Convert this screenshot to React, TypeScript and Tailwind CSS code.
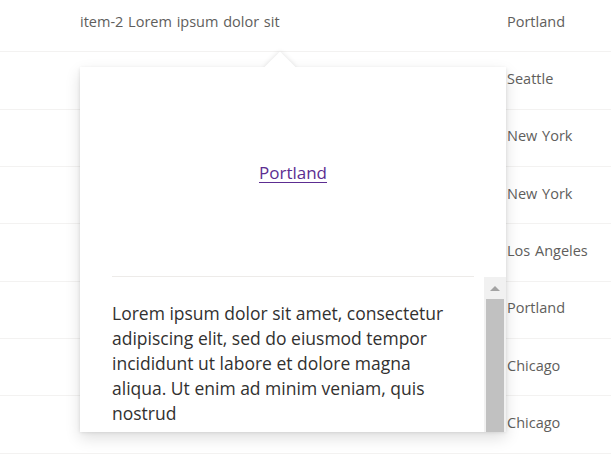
import React from "react";

const ROWS = [
  { name: "item-2 Lorem ipsum dolor sit", city: "Portland" },
  { name: "item-3 Lorem ipsum dolor sit", city: "Seattle" },
  { name: "item-4 Lorem ipsum dolor sit", city: "New York" },
  { name: "item-5 Lorem ipsum dolor sit", city: "New York" },
  { name: "item-6 Lorem ipsum dolor sit", city: "Los Angeles" },
  { name: "item-7 Lorem ipsum dolor sit", city: "Portland" },
  { name: "item-8 Lorem ipsum dolor sit", city: "Chicago" },
  { name: "item-9 Lorem ipsum dolor sit", city: "Chicago" },
];

const BODY =
  "Lorem ipsum dolor sit amet, consectetur adipiscing elit, sed do eiusmod tempor incididunt ut labore et dolore magna aliqua. Ut enim ad minim veniam, quis nostrud";

function DetailsCallout({ city }: { city: string }) {
  return (
    <div className="absolute left-[80px] top-[67px] w-[426px] h-[365px] bg-white shadow-[0_6.4px_14.4px_rgba(0,0,0,0.13),0_1.2px_3.6px_rgba(0,0,0,0.11)]">
      {/* beak, tucked under a white curtain so only the tip shows */}
      <div className="absolute left-[189px] top-[-11px] w-[22px] h-[22px] rotate-45 bg-white shadow-[0_0_5px_rgba(0,0,0,0.13)]" />
      <div className="relative flex flex-col h-full bg-white">
        <div className="h-[209px] pt-[2px] flex items-center justify-center">
          <a href="#" className="text-[17px] text-[#5c2d91] underline underline-offset-[3px]">
            {city}
          </a>
        </div>
        <div className="mx-8 h-px bg-[#edebe9]" />
        <div className="flex flex-1 min-h-0">
          <div className="flex-1 overflow-hidden pl-8 pr-6 pt-[24px]">
            <p className="text-[17.5px] leading-[25px] text-[#323130]">{BODY}</p>
          </div>
          {/* scrollbar */}
          <div className="w-[22px] flex flex-col bg-[#f1f1f1]">
            <div className="h-[22px] flex items-center justify-center">
              <div className="w-0 h-0 border-l-[5px] border-r-[5px] border-b-[5px] border-l-transparent border-r-transparent border-b-[#a3a3a3]" />
            </div>
            <div className="flex-1 mx-[2px] bg-[#c1c1c1]" />
          </div>
        </div>
      </div>
    </div>
  );
}

export default function App() {
  return (
    <div
      className="relative w-[611px] h-[463px] overflow-hidden bg-white"
      style={{ fontFamily: '"Open Sans", "Noto Sans", sans-serif' }}
    >
      <div className="-mt-[5px]">
        {ROWS.map((r, i) => (
          <div
            key={i}
            className="flex items-center h-[57.33px] pb-[3px] border-b border-[#f3f2f1] text-[14.5px] [word-spacing:1px] text-[#605e5c]"
          >
            <div className="w-[80px]" />
            <div className="w-[427px] truncate">{r.name}</div>
            <div className="flex-1 whitespace-nowrap">{r.city}</div>
          </div>
        ))}
      </div>
      <DetailsCallout city="Portland" />
    </div>
  );
}
